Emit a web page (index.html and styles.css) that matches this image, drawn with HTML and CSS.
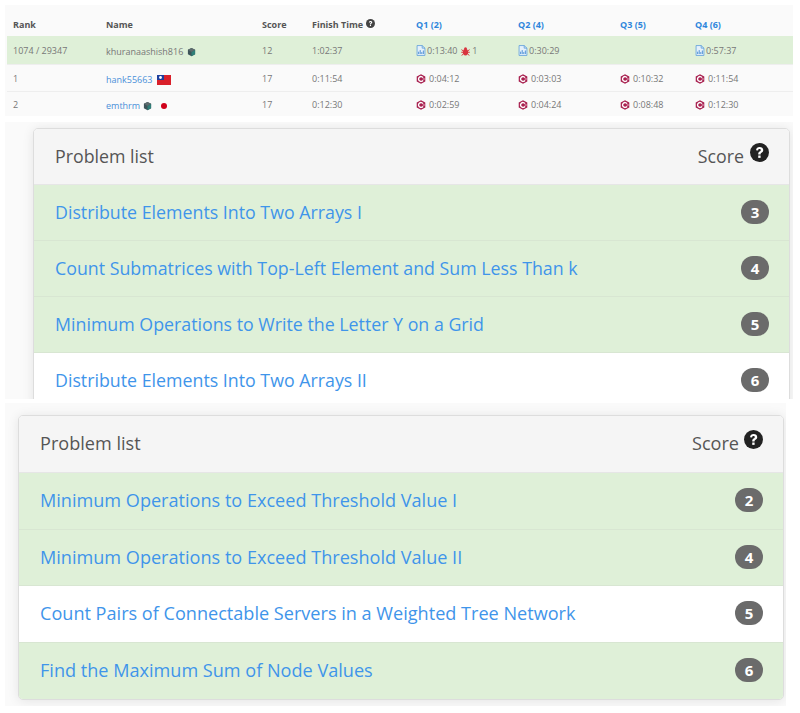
FILE: index.html
```html
<!DOCTYPE html>
<html lang="en">
<head>
<meta charset="utf-8">
<title>Contest ranking</title>
<link rel="stylesheet" href="styles.css">
</head>
<body>
<svg class="defs" width="0" height="0" aria-hidden="true">
  <defs>
    <symbol id="q" viewBox="0 0 24 24"><circle cx="12" cy="12" r="12" fill="currentColor"/><path d="M7.600 9.200C7.900 6.700 9.700 5.200 12.100 5.200c2.700 0 4.600 1.600 4.600 3.800 0 1.700-.9 2.500-2.100 3.300-1 .7-1.200 1-1.200 2.100h-3c0-1.900.5-2.800 1.700-3.600 1-.7 1.500-1.100 1.500-1.800 0-.8-.7-1.300-1.600-1.300-1 0-1.600.6-1.800 1.700z" fill="#fff"/><rect x="10.400" y="15.800" width="3" height="3" fill="#fff"/></symbol>
    <symbol id="cube" viewBox="0 0 12 12"><path d="M6 .5 10.800 3v6L6 11.500 1.200 9V3z" fill="#3d5459"/><path d="M6 6 10.800 3v6L6 11.500z" fill="#2f7f78"/><path d="M6 .5 10.800 3 6 6 1.200 3z" fill="#5d6b6d"/></symbol>
    <symbol id="cpp" viewBox="0 0 14 14"><path d="M7 .2 13 3.600v6.800L7 13.800 1 10.400V3.600z" fill="#a8204f"/><path d="M9.800 5.100A3.400 3.400 0 1 0 9.800 8.900" fill="none" stroke="#fff" stroke-width="2"/><path d="M9.300 6.300h3v1.400h-3z" fill="#f0c0d0"/></symbol>
    <symbol id="doc" viewBox="0 0 12 14"><path d="M1 .7h6.500L11 4v9.300H1z" fill="#e4f0fb" stroke="#5b9bd9" stroke-width="1"/><path d="M7.500.7V4H11" fill="none" stroke="#5b9bd9"/><path d="M3 11.500V8.500M5 11.500V6.500M7 11.500V9M9 11.500V7" stroke="#4a8ed4" stroke-width="1.200"/></symbol>
    <symbol id="bug" viewBox="0 0 12 12"><ellipse cx="6" cy="7" rx="3.500" ry="4.200" fill="#d9343f"/><circle cx="6" cy="2.400" r="2" fill="#d9343f"/><path d="M.6 3.500 3 5.200M11.400 3.500 9 5.200M.3 7h2.700M11.700 7H9M.8 11.300l2.400-2M11.200 11.300l-2.400-2" stroke="#d9343f" stroke-width="1.300"/></symbol>
  </defs>
</svg>

<section class="board">
  <table class="ranks">
    <colgroup>
      <col class="c-rank"><col class="c-name"><col class="c-score"><col class="c-finish">
      <col class="c-q1"><col class="c-q2"><col class="c-q3"><col class="c-q4">
    </colgroup>
    <thead>
      <tr>
        <th>Rank</th><th>Name</th><th>Score</th>
        <th>Finish Time <svg class="ico-q"><use href="#q"/></svg></th>
        <th class="qh">Q1 (2)</th><th class="qh">Q2 (4)</th><th class="qh">Q3 (5)</th><th class="qh">Q4 (6)</th>
      </tr>
    </thead>
    <tbody>
      <tr class="mine">
        <td>1074 / 29347</td>
        <td><span class="who">khuranaashish816 <svg class="ico-cube"><use href="#cube"/></svg></span></td>
        <td>12</td><td>1:02:37</td>
        <td><svg class="ico-doc"><use href="#doc"/></svg>0:13:40 <svg class="ico-bug"><use href="#bug"/></svg> 1</td>
        <td><svg class="ico-doc"><use href="#doc"/></svg>0:30:29</td>
        <td></td>
        <td><svg class="ico-doc"><use href="#doc"/></svg>0:57:37</td>
      </tr>
      <tr>
        <td>1</td>
        <td><span class="who"><a class="user">hank55663</a> <svg class="flag" viewBox="0 0 14 10"><rect width="14" height="10" fill="#d9202a"/><rect width="7" height="5" fill="#1d3f9e"/><circle cx="3.500" cy="2.500" r="1.400" fill="#fff"/></svg></span></td>
        <td>17</td><td>0:11:54</td>
        <td><svg class="ico-cpp"><use href="#cpp"/></svg>0:04:12</td>
        <td><svg class="ico-cpp"><use href="#cpp"/></svg>0:03:03</td>
        <td><svg class="ico-cpp"><use href="#cpp"/></svg>0:10:32</td>
        <td><svg class="ico-cpp"><use href="#cpp"/></svg>0:11:54</td>
      </tr>
      <tr>
        <td>2</td>
        <td><span class="who"><a class="user">emthrm</a> <svg class="ico-cube"><use href="#cube"/></svg><span class="jp"></span></span></td>
        <td>17</td><td>0:12:30</td>
        <td><svg class="ico-cpp"><use href="#cpp"/></svg>0:02:59</td>
        <td><svg class="ico-cpp"><use href="#cpp"/></svg>0:04:24</td>
        <td><svg class="ico-cpp"><use href="#cpp"/></svg>0:08:48</td>
        <td><svg class="ico-cpp"><use href="#cpp"/></svg>0:12:30</td>
      </tr>
    </tbody>
  </table>
</section>

<section class="shot shot-a">
  <div class="card">
    <div class="card-head"><span>Problem list</span><span class="score-h">Score <svg class="ico-qh"><use href="#q"/></svg></span></div>
    <div class="row ok"><a>Distribute Elements Into Two Arrays I</a><span class="pts">3</span></div>
    <div class="row ok"><a>Count Submatrices with Top-Left Element and Sum Less Than k</a><span class="pts">4</span></div>
    <div class="row ok"><a>Minimum Operations to Write the Letter Y on a Grid</a><span class="pts">5</span></div>
    <div class="row"><a>Distribute Elements Into Two Arrays II</a><span class="pts">6</span></div>
  </div>
</section>

<section class="shot shot-b">
  <div class="card">
    <div class="card-head"><span>Problem list</span><span class="score-h">Score <svg class="ico-qh"><use href="#q"/></svg></span></div>
    <div class="row ok"><a>Minimum Operations to Exceed Threshold Value I</a><span class="pts">2</span></div>
    <div class="row ok"><a>Minimum Operations to Exceed Threshold Value II</a><span class="pts">4</span></div>
    <div class="row"><a>Count Pairs of Connectable Servers in a Weighted Tree Network</a><span class="pts">5</span></div>
    <div class="row ok"><a>Find the Maximum Sum of Node Values</a><span class="pts">6</span></div>
  </div>
</section>
</body>
</html>
```
FILE: styles.css
```css
* { box-sizing: border-box; }
html, body { margin: 0; padding: 0; }
body {
  width: 800px;
  height: 713px;
  overflow: hidden;
  background: #fff;
  font-family: "Open Sans", "Liberation Sans", sans-serif;
  color: #555;
}
.defs { position: absolute; }

.board {
  margin: 5px 7px 0 5px;
  height: 111px;
  background: #fafafa;
  padding-left: 2px;
}
.ranks {
  border-collapse: collapse;
  table-layout: fixed;
  width: 786px;
  font-size: 9px;
  color: #777;
}
.c-rank { width: 93px; }
.c-name { width: 156px; }
.c-score { width: 50px; }
.c-finish { width: 104px; }
.c-q1 { width: 102px; }
.c-q2 { width: 102px; }
.c-q3 { width: 75px; }
.c-q4 { width: 104px; }
.ranks th {
  height: 31px;
  padding: 7px 0 0 6px;
  text-align: left;
  font-weight: 700;
  color: #555;
  white-space: nowrap;
}
.ranks th.qh { color: #2f86dc; }
.ranks td {
  height: 27px;
  padding: 1px 0 0 6px;
  white-space: nowrap;
  border-top: 1px solid #eee;
}
.ranks tr.mine td { height: 28px; background: #dff0d8; border-top: 0; }
.ranks tbody tr:last-child td { height: 25px; }
.who { position: relative; top: 1px; }
.user { color: #4a90d9; }
.ranks svg { vertical-align: -2px; }
.ico-q { width: 9px; height: 9px; color: #444; vertical-align: 0 !important; }
.ico-cube { width: 9px; height: 10px; margin-left: 1px; }
.ico-cpp { width: 10px; height: 10px; margin-right: 3px; }
.ico-doc { width: 10px; height: 11px; margin-right: 1px; }
.ico-bug { width: 9px; height: 9px; margin-left: 1px; }
.flag { width: 14px; height: 10px; margin-left: 2px; }
.jp {
  display: inline-block;
  width: 6px;
  height: 6px;
  margin-left: 9px;
  border-radius: 50%;
  background: #d0021b;
  vertical-align: 0;
}

.shot { background: #fafafa; overflow: hidden; }
.shot-a {
  margin: 6px 7px 0 5px;
  height: 277px;
  padding: 6px 3px 0 28px;
}
.shot-b {
  margin: 4px 14px 0 5px;
  height: 303px;
  padding: 12px 2px 0 13px;
}
.card {
  border: 1px solid #ddd;
  border-radius: 5px;
  background: #fff;
  box-shadow: 0 1px 12px rgba(0,0,0,.09);
  overflow: hidden;
}
.card-head {
  height: 56px;
  padding: 0 20px 2px 21px;
  display: flex;
  justify-content: space-between;
  align-items: center;
  background: #f5f5f5;
  color: #555;
  border-bottom: 1px solid #e6e6e6;
}
.shot-a .card-head, .shot-a .row { font-size: 17.8px; }
.shot-b .card-head, .shot-b .row { font-size: 18.1px; }
.shot-b .card-head { height: 57px; }
.shot-b .score-h { gap: 5px; }
.score-h { display: flex; align-items: flex-start; gap: 6px; }
.ico-qh { width: 19px; height: 19px; color: #222; margin-top: -1px; }
.row {
  height: 56px;
  padding: 0 20px 2px 21px;
  display: flex;
  justify-content: space-between;
  align-items: center;
  background: #fff;
  border-bottom: 1px solid #d8e6d2;
}
.shot-b .row { height: 56.5px; padding-bottom: 1px; }
.row:last-child { border-bottom: 0; }
.row.ok { background: #dff0d8; }
.row a { color: #3f95ea; }
.pts {
  width: 28px;
  height: 24px;
  border-radius: 12px;
  background: #6b6b6b;
  color: #fff;
  font-size: 15px;
  font-weight: 700;
  text-align: center;
  line-height: 24px;
}
```
